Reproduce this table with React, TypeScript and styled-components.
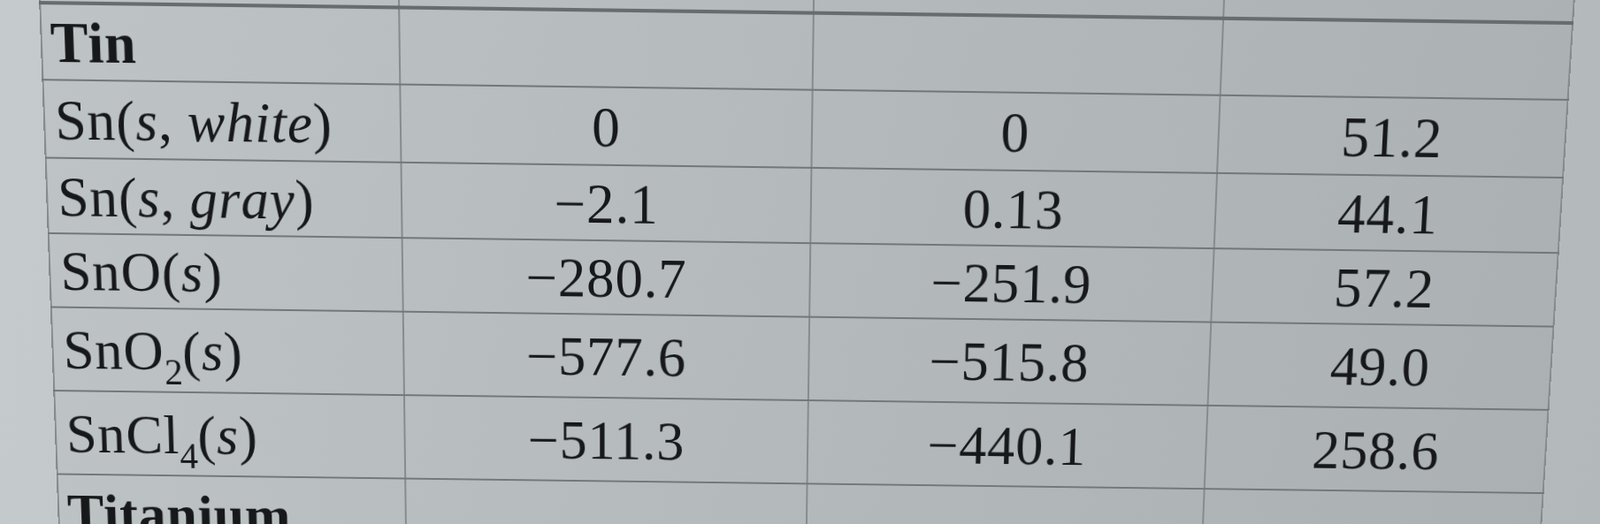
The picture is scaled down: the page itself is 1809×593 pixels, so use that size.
import React from "react";
import styled, { createGlobalStyle } from "styled-components";

const GlobalStyle = createGlobalStyle`
  html, body {
    margin: 0;
    padding: 0;
    width: 1809px;
    height: 593px;
    overflow: hidden;
  }
  body {
    background: linear-gradient(100deg, #c5cacc 0%, #bcc1c4 55%, #b3b8bb 100%);
    font-family: "Liberation Serif", "Times New Roman", serif;
  }
`;

const Stage = styled.div`
  width: 1809px;
  height: 593px;
  overflow: hidden;
  box-sizing: border-box;
  padding-left: 55px;
  display: flex;
  align-items: flex-start;
`;

const Sheet = styled.table`
  margin-top: -30px;
  width: 1705px;
  flex: none;
  border-collapse: collapse;
  table-layout: fixed;
  background: linear-gradient(100deg, #bec3c5 0%, #b4b9bc 50%, #abb0b3 100%);
  color: #16181a;
  font-size: 63px;
  letter-spacing: 0.8px;
  transform-origin: 852px 326px;
  transform: perspective(1500px) rotateX(-5deg) rotateZ(0.75deg);
`;

const Row = styled.tr<{ $h: number }>`
  height: ${(p) => p.$h}px;
`;

const HeadRow = styled.tr`
  height: 48px;
  & > td {
    border-bottom: 4px solid #676c6f;
  }
`;

const Cell = styled.td`
  border-left: 2px solid #868b8e;
  border-right: 2px solid #868b8e;
  border-bottom: 2px solid #72777a;
  vertical-align: middle;
  padding: 3px 0 0 0;
  white-space: nowrap;
  overflow: hidden;
`;

const LabelCell = styled(Cell)<{ $bold?: boolean }>`
  text-align: left;
  padding-left: ${(p) => (p.$bold ? 9 : 11)}px;
  font-weight: ${(p) => (p.$bold ? 700 : 400)};
`;

const ValueCell = styled(Cell)`
  text-align: center;
`;

const Em = styled.i`
  font-style: italic;
`;

const Sub = styled.sub`
  font-size: 0.66em;
  line-height: 0;
  vertical-align: -0.4em;
  letter-spacing: 0;
`;

type Entry = {
  label: React.ReactNode;
  values?: [string, string, string];
  bold?: boolean;
  h: number;
};

const rows: Entry[] = [
  { label: "Tin", bold: true, h: 85 },
  {
    label: (
      <>
        Sn(<Em>s</Em>, <Em>white</Em>)
      </>
    ),
    values: ["0", "0", "51.2"],
    h: 87,
  },
  {
    label: (
      <>
        Sn(<Em>s</Em>, <Em>gray</Em>)
      </>
    ),
    values: ["\u22122.1", "0.13", "44.1"],
    h: 85,
  },
  {
    label: (
      <>
        SnO(<Em>s</Em>)
      </>
    ),
    values: ["\u2212280.7", "\u2212251.9", "57.2"],
    h: 84,
  },
  {
    label: (
      <>
        SnO<Sub>2</Sub>(<Em>s</Em>)
      </>
    ),
    values: ["\u2212577.6", "\u2212515.8", "49.0"],
    h: 96,
  },
  {
    label: (
      <>
        SnCl<Sub>4</Sub>(<Em>s</Em>)
      </>
    ),
    values: ["\u2212511.3", "\u2212440.1", "258.6"],
    h: 97,
  },
  { label: "Titanium", bold: true, h: 90 },
];

const widths = [399, 461, 456, 389];

export default function App() {
  return (
    <>
      <GlobalStyle />
      <Stage>
        <Sheet>
          <colgroup>
            {widths.map((w, i) => (
              <col key={i} style={{ width: w }} />
            ))}
          </colgroup>
          <tbody>
            <HeadRow>
              <Cell />
              <Cell />
              <Cell />
              <Cell />
            </HeadRow>
            {rows.map((r, i) => (
              <Row key={i} $h={r.h}>
                <LabelCell $bold={r.bold}>{r.label}</LabelCell>
                <ValueCell>{r.values ? r.values[0] : ""}</ValueCell>
                <ValueCell>{r.values ? r.values[1] : ""}</ValueCell>
                <ValueCell>{r.values ? r.values[2] : ""}</ValueCell>
              </Row>
            ))}
          </tbody>
        </Sheet>
      </Stage>
    </>
  );
}
